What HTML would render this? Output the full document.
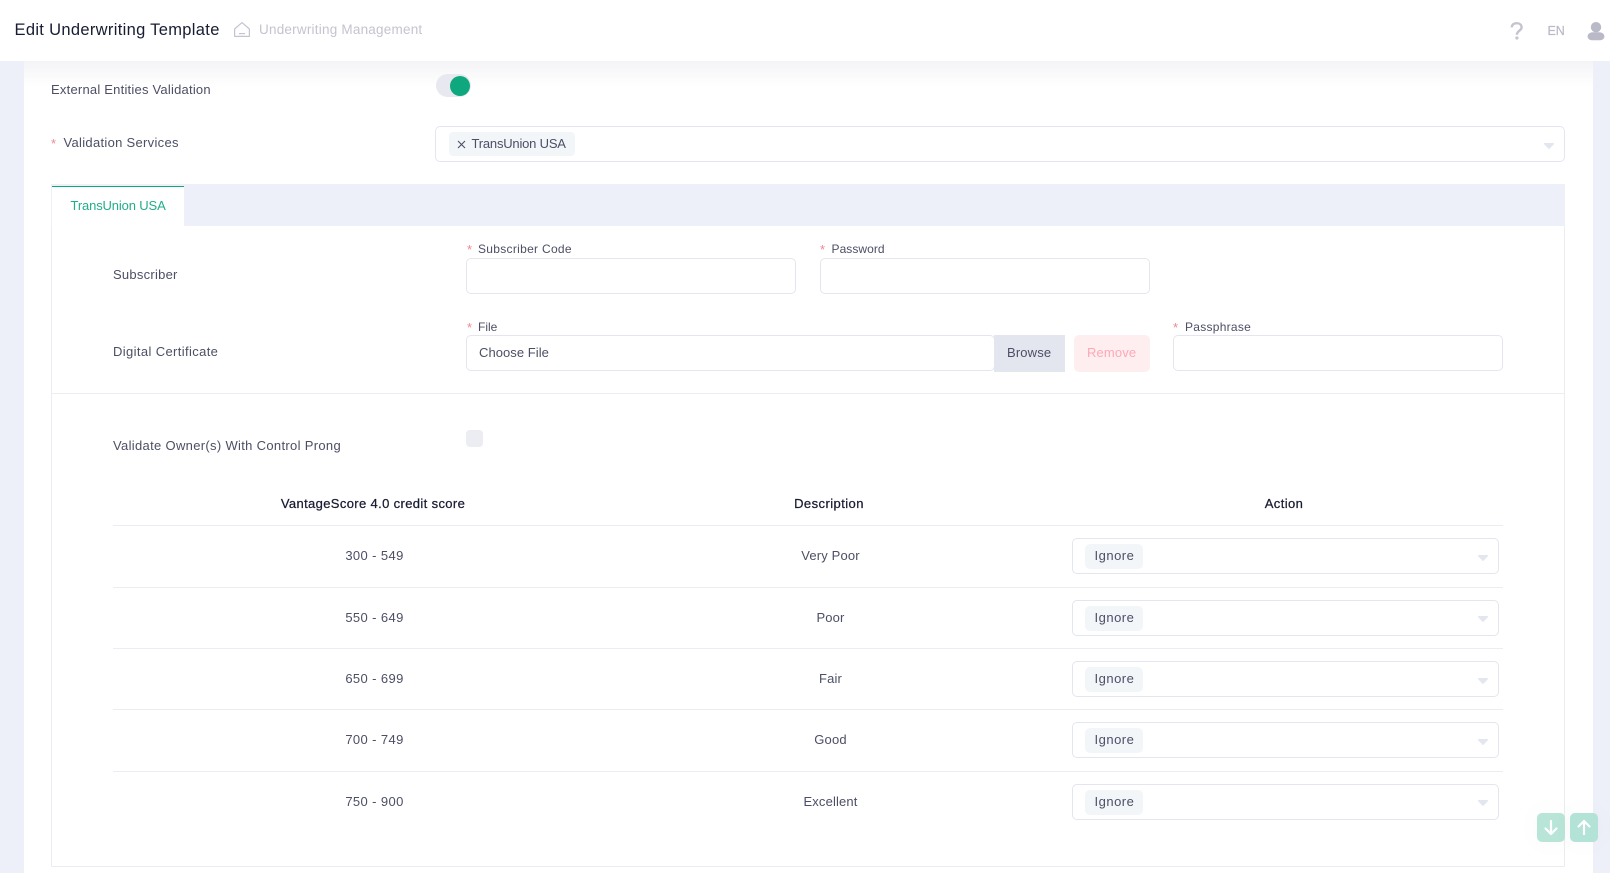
<!DOCTYPE html>
<html lang="en">
<head>
<meta charset="utf-8">
<title>Edit Underwriting Template</title>
<style>
html,body{margin:0;padding:0;width:1610px;height:873px;overflow:hidden;background:#edf0f8;font-family:"Liberation Sans",sans-serif;color:#4c4f65}
*{box-sizing:border-box}
.a{position:absolute}
.t{position:absolute;height:20px;line-height:20px;font-size:13px;letter-spacing:.38px;white-space:nowrap}
.c{transform:translateX(-50%)}
.s{color:#f1868f}
.f{font-size:12px}
.b{position:absolute;background:#fff;border:1px solid #e5e5ef;border-radius:5px}
.h{font-weight:400;color:#181c32;-webkit-text-stroke:.25px #181c32}
.l{position:absolute;left:113px;width:1390px;height:1px;background:#ebedf3}
.g{position:absolute;left:1085px;width:58px;height:25px;background:#f3f6f9;border-radius:5px}
.i{letter-spacing:.5px}
.n{letter-spacing:.15px}
.ar{position:absolute}
</style>
</head>
<body>

<div class="a" style="left:24px;top:61px;width:1569px;height:812px;background:#fff"></div>
<div class="a" style="left:24px;top:61px;width:1569px;height:26px;background:linear-gradient(#f4f4f7,#fff)"></div>

<div class="a" style="left:0;top:0;width:1610px;height:61px;background:#fff"></div>
<div class="t" style="left:14.500px;top:20px;font-size:16.5px;letter-spacing:.32px;color:#181c32">Edit Underwriting Template</div>
<svg class="a" style="left:233px;top:21px" width="18" height="17" viewBox="0 0 18 17" fill="none" stroke="#c4c4cf" stroke-width="1.2"><path d="M1.6 8 9 1.6 16.4 8v7.400H1.600Z" stroke-linejoin="round"/><path d="M6 12.600h6"/></svg>
<div class="t" style="left:259px;top:20px;font-size:13.5px;letter-spacing:.22px;color:#c4c4cf">Underwriting Management</div>
<svg class="a" style="left:1509px;top:21px" width="16" height="20" viewBox="0 0 16 20" fill="none"><path d="M2.800 6.400C2.800 3.600 5 2.200 7.700 2.200s4.900 1.500 4.900 4c0 3.600-4.700 3.400-4.700 7.600" stroke="#c4c4cf" stroke-width="2.400"/><circle cx="7.900" cy="17" r="1.600" fill="#c4c4cf"/></svg>
<div class="t" style="left:1547.5px;top:20.5px;font-size:12.5px;letter-spacing:-.1px;color:#b9b9c8;-webkit-text-stroke:.2px #b9b9c8">EN</div>
<svg class="a" style="left:1587px;top:21px" width="18" height="20" viewBox="0 0 18 20" fill="#b9b9c8"><circle cx="9" cy="6.200" r="5.200"/><path d="M.6 15.300C.6 12.600 3.500 11.200 5.600 11.200h6.800c2.100 0 5 1.400 5 4.100 0 2.600-2 3.900-4.200 3.900H4.800C2.600 19.200.6 17.900.6 15.300Z"/></svg>

<div class="t" style="left:51px;top:80px;letter-spacing:.22px">External Entities Validation</div>
<div class="a" style="left:436px;top:74px;width:35px;height:23px;border-radius:12px;background:#e8e9f0"></div>
<div class="a" style="left:449.5px;top:75.5px;width:20px;height:20px;border-radius:50%;background:#0fa87e"></div>

<div class="t s" style="left:51px;top:134px">*</div>
<div class="t" style="left:63.5px;top:133px;letter-spacing:.3px">Validation Services</div>
<div class="b" style="left:435px;top:126px;width:1130px;height:36px"></div>
<div class="a" style="left:449px;top:132px;width:126px;height:24px;background:#f3f6f9;border-radius:4px"></div>
<svg class="a" style="left:457px;top:140px" width="9" height="9" viewBox="0 0 9 9" stroke="#4c4f65" stroke-width="1.100"><path d="M1 1l7 7M8 1l-7 7"/></svg>
<div class="t" style="left:471.5px;top:134px;letter-spacing:-.2px">TransUnion USA</div>
<svg class="ar" style="left:1544px;top:143px" width="10" height="6" viewBox="0 0 10 6"><path d="M.8 0h8.400c.7 0 1 .7.6 1.200L5.600 5.600c-.3.4-.9.4-1.200 0L.2 1.200C-.2.7.1 0 .8 0Z" fill="#e3e5ef"/></svg>

<div class="a" style="left:51px;top:184px;width:1514px;height:683px;border:1px solid #ebedf3;border-top:0"></div>
<div class="a" style="left:51px;top:184px;width:1514px;height:42px;background:#edf0f8"></div>
<div class="a" style="left:52px;top:185.500px;width:132px;height:40.500px;background:#fff;border-top:1.5px solid #0fa87e"></div>
<div class="t" style="left:70.5px;top:196px;letter-spacing:-.14px;color:#22ad88">TransUnion USA</div>

<div class="t" style="left:113px;top:265px;letter-spacing:.25px">Subscriber</div>
<div class="t s" style="left:467px;top:240px">*</div>
<div class="t f" style="left:478px;top:239px;letter-spacing:.3px">Subscriber Code</div>
<div class="b" style="left:466px;top:258px;width:330px;height:36px"></div>
<div class="t s" style="left:820px;top:240px">*</div>
<div class="t f" style="left:831.5px;top:239px;letter-spacing:.06px">Password</div>
<div class="b" style="left:820px;top:258px;width:330px;height:36px"></div>

<div class="t" style="left:113px;top:342px;letter-spacing:.37px">Digital Certificate</div>
<div class="t s" style="left:467px;top:318px">*</div>
<div class="t f" style="left:478px;top:317px;letter-spacing:0">File</div>
<div class="b" style="left:466px;top:335px;width:529px;height:36px"></div>
<div class="t" style="left:479px;top:343px;letter-spacing:.05px">Choose File</div>
<div class="a" style="left:993.5px;top:335px;width:71px;height:37px;background:#e4e6ef"></div>
<div class="t" style="left:1007px;top:343px;letter-spacing:.15px">Browse</div>
<div class="a" style="left:1074px;top:335px;width:76px;height:37px;background:#ffeef0;border-radius:5px"></div>
<div class="t" style="left:1087px;top:343px;letter-spacing:.15px;color:#ffa8b5">Remove</div>
<div class="t s" style="left:1173px;top:318px">*</div>
<div class="t f" style="left:1185px;top:317px;letter-spacing:.27px">Passphrase</div>
<div class="b" style="left:1172.5px;top:335px;width:330px;height:36px"></div>
<div class="a" style="left:51px;top:393px;width:1514px;height:1px;background:#ebedf3"></div>

<div class="t" style="left:113px;top:436px;letter-spacing:.32px">Validate Owner(s) With Control Prong</div>
<div class="a" style="left:466px;top:430px;width:17px;height:17px;background:#ebedf3;border-radius:4px"></div>

<div class="t h c" style="left:373px;top:494px;letter-spacing:.36px">VantageScore 4.0 credit score</div>
<div class="t h c" style="left:829px;top:494px;letter-spacing:.43px">Description</div>
<div class="t h c" style="left:1284px;top:494px;letter-spacing:.4px">Action</div>
<div class="l" style="top:525px"></div>

<div class="t c" style="left:374.5px;top:545.5px">300 - 549</div>
<div class="t c n" style="left:830.5px;top:545.5px">Very Poor</div>
<div class="b" style="left:1072px;top:538px;width:427px;height:36px"></div>
<div class="g" style="top:544px"></div>
<div class="t i" style="left:1094.5px;top:546px">Ignore</div>
<svg class="ar" style="left:1477.5px;top:555px" width="10" height="6" viewBox="0 0 10 6"><path d="M.8 0h8.400c.7 0 1 .7.6 1.200L5.600 5.600c-.3.4-.9.4-1.200 0L.2 1.200C-.2.7.1 0 .8 0Z" fill="#e3e5ef"/></svg>
<div class="l" style="top:587px"></div>

<div class="t c" style="left:374.5px;top:608px">550 - 649</div>
<div class="t c n" style="left:830.5px;top:608px">Poor</div>
<div class="b" style="left:1072px;top:600px;width:427px;height:36px"></div>
<div class="g" style="top:606px"></div>
<div class="t i" style="left:1094.5px;top:608px">Ignore</div>
<svg class="ar" style="left:1477.5px;top:616px" width="10" height="6" viewBox="0 0 10 6"><path d="M.8 0h8.400c.7 0 1 .7.6 1.200L5.600 5.600c-.3.4-.9.4-1.200 0L.2 1.200C-.2.7.1 0 .8 0Z" fill="#e3e5ef"/></svg>
<div class="l" style="top:648px"></div>

<div class="t c" style="left:374.5px;top:668.5px">650 - 699</div>
<div class="t c n" style="left:830.5px;top:668.5px">Fair</div>
<div class="b" style="left:1072px;top:661px;width:427px;height:36px"></div>
<div class="g" style="top:667px"></div>
<div class="t i" style="left:1094.5px;top:669px">Ignore</div>
<svg class="ar" style="left:1477.5px;top:678px" width="10" height="6" viewBox="0 0 10 6"><path d="M.8 0h8.400c.7 0 1 .7.6 1.200L5.600 5.600c-.3.4-.9.4-1.200 0L.2 1.200C-.2.7.1 0 .8 0Z" fill="#e3e5ef"/></svg>
<div class="l" style="top:709px"></div>

<div class="t c" style="left:374.5px;top:729.5px">700 - 749</div>
<div class="t c n" style="left:830.5px;top:729.5px">Good</div>
<div class="b" style="left:1072px;top:722px;width:427px;height:36px"></div>
<div class="g" style="top:728px"></div>
<div class="t i" style="left:1094.5px;top:730px">Ignore</div>
<svg class="ar" style="left:1477.5px;top:739px" width="10" height="6" viewBox="0 0 10 6"><path d="M.8 0h8.400c.7 0 1 .7.6 1.200L5.600 5.600c-.3.4-.9.4-1.200 0L.2 1.200C-.2.7.1 0 .8 0Z" fill="#e3e5ef"/></svg>
<div class="l" style="top:771px"></div>

<div class="t c" style="left:374.5px;top:792px">750 - 900</div>
<div class="t c n" style="left:830.5px;top:792px">Excellent</div>
<div class="b" style="left:1072px;top:784px;width:427px;height:36px"></div>
<div class="g" style="top:790px"></div>
<div class="t i" style="left:1094.5px;top:792px">Ignore</div>
<svg class="ar" style="left:1477.5px;top:800px" width="10" height="6" viewBox="0 0 10 6"><path d="M.8 0h8.400c.7 0 1 .7.6 1.200L5.600 5.600c-.3.4-.9.4-1.200 0L.2 1.200C-.2.7.1 0 .8 0Z" fill="#e3e5ef"/></svg>

<div class="a" style="left:1537px;top:813px;width:28px;height:29px;background:#b8e5d8;border-radius:5px;box-shadow:0 0 30px rgba(0,0,0,.03)"></div>
<svg class="a" style="left:1537px;top:813px" width="28" height="29" viewBox="0 0 28 29" fill="none" stroke="#fff" stroke-width="2.200" stroke-linecap="round" stroke-linejoin="round"><path d="M14 8v13M8.500 15.500 14 21l5.500-5.500"/></svg>
<div class="a" style="left:1570px;top:813px;width:28px;height:29px;background:#b3e2d6;border-radius:5px;box-shadow:0 0 30px rgba(0,0,0,.03)"></div>
<svg class="a" style="left:1570px;top:813px" width="28" height="29" viewBox="0 0 28 29" fill="none" stroke="#fff" stroke-width="2.200" stroke-linecap="round" stroke-linejoin="round"><path d="M14 21V8M8.500 13.500 14 8l5.500 5.500"/></svg>

</body>
</html>
